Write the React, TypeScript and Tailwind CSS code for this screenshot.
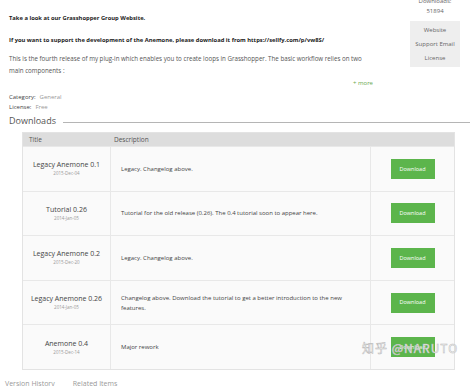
import React from 'react';

const rows = [
  { title: 'Legacy Anemone 0.1', date: '2015-Dec-04', desc: 'Legacy. Changelog above.' },
  { title: 'Tutorial 0.26', date: '2014-Jan-05', desc: 'Tutorial for the old release (0.26). The 0.4 tutorial soon to appear here.' },
  { title: 'Legacy Anemone 0.2', date: '2015-Dec-20', desc: 'Legacy. Changelog above.' },
  { title: 'Legacy Anemone 0.26', date: '2014-Jan-05', desc: 'Changelog above. Download the tutorial to get a better introduction to the new features.' },
  { title: 'Anemone 0.4', date: '2015-Dec-14', desc: 'Major rework' },
];

export default function App() {
  return (
    <div
      className="w-[474px] h-[386px] bg-white relative overflow-hidden text-[#444]"
      style={{ fontFamily: '"Open Sans", "Noto Sans", sans-serif' }}
    >
      {/* Top section */}
      <div className="flex">
        <div className="w-[366px] ml-[9px] pt-[13px]">
          <p className="text-[5.8px] leading-[10px] font-bold text-[#222]">
            Take a look at our Grasshopper Group Website.
          </p>
          <p className="mt-[12px] text-[5.8px] leading-[10px] font-bold text-[#222]">
            If you want to support the development of the Anemone, please download it from https://sellfy.com/p/vw8S/
          </p>
          <p className="mt-[8px] w-[360px] text-[6.2px] leading-[12px] text-[#555]">
            This is the fourth release of my plug-in which enables you to create loops in Grasshopper. The basic workflow relies on two main components :
          </p>
          <div className="text-right text-[6px] leading-[12px] text-[#6aa84f] mr-[2px]">+ more</div>
          <div className="mt-[3px] text-[6px] leading-[10px]">
            <div>
              <span className="text-[#444]">Category:</span>
              <span className="ml-[4px] text-[#999]">General</span>
            </div>
            <div>
              <span className="text-[#444]">License:</span>
              <span className="ml-[4px] text-[#999]">Free</span>
            </div>
          </div>
        </div>
        <div className="flex-1 flex flex-col items-center mt-[-4px] ml-[35px] mr-[14px]">
          <div className="text-[6px] leading-[10px] text-[#666]">Downloads:</div>
          <div className="text-[6px] leading-[10px] text-[#666]">51894</div>
          <div className="mt-[5px] w-full bg-[#eeeeee] flex flex-col items-center py-[2px] text-[6px] leading-[14px] text-[#666]">
            <span>Website</span>
            <span>Support Email</span>
            <span>License</span>
          </div>
        </div>
      </div>

      {/* Downloads heading */}
      <div className="flex items-center ml-[9px] mr-[4px] mt-[3px]">
        <span className="text-[9px] leading-[12px] text-[#555]">Downloads</span>
        <div className="flex-1 h-px bg-[#b5b5b5] ml-[7px] mt-[2px]"></div>
      </div>

      {/* Table */}
      <div className="ml-[22px] w-[433px] mt-[5px] border border-[#e3e3e3] bg-[#fafafa]">
        <div className="flex bg-[#dddddd] h-[13px] items-center text-[6.5px] text-[#555]">
          <div className="w-[88px] pl-[6px]">Title</div>
          <div className="w-[260px] pl-[3px]">Description</div>
          <div className="flex-1"></div>
        </div>
        {rows.map((r) => (
          <div key={r.title} className="flex h-[44.6px] border-t border-[#e8e8e8]">
            <div className="w-[88px] border-r border-[#e8e8e8] flex flex-col items-center justify-center">
              <span className="text-[7px] leading-[10px] text-[#444]">{r.title}</span>
              <span className="text-[4.5px] leading-[7px] text-[#999]">{r.date}</span>
            </div>
            <div className="w-[260px] border-r border-[#e8e8e8] flex items-center pl-[10px] pr-[8px]">
              <span className="text-[6px] leading-[10px] text-[#444]">{r.desc}</span>
            </div>
            <div className="flex-1 flex items-center justify-center">
              <button className="w-[44px] h-[20px] bg-[#5cb54c] text-white text-[5.5px]">Download</button>
            </div>
          </div>
        ))}
      </div>

      {/* Cut bottom text */}
      <div className="ml-[5px] mt-[9px] text-[7px] leading-[10px] text-[#999] flex gap-[18px]">
        <span>Version History</span>
        <span>Related Items</span>
      </div>

      {/* Watermark */}
      <div
        className="absolute left-[362px] top-[340px] text-[12px] leading-[16px] text-white tracking-[1px]"
        style={{ WebkitTextStroke: '0.5px #b8b8b8', fontFamily: '"Noto Sans CJK SC", "Noto Sans", sans-serif' }}
      >
        知乎 @NARUTO
      </div>
    </div>
  );
}
